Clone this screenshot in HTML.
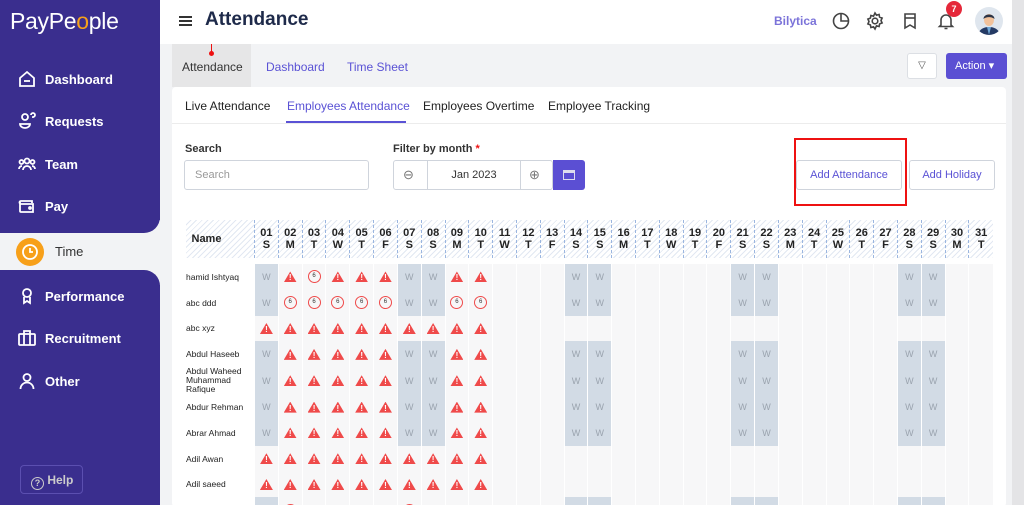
<!DOCTYPE html>
<html style="overflow:hidden;width:1024px;height:505px"><head><meta charset="utf-8"><style>
*{box-sizing:border-box;margin:0;padding:0}
body{width:1024px;height:505px;overflow:hidden;background:#f2f3f5;font-family:"Liberation Sans",sans-serif;position:relative}
.sb{position:absolute;left:0;top:0;width:160px;height:505px;background:#3a2e8e}
.sb .top{position:absolute;left:0;top:0;width:160px;height:233px;background:#3a2e8e;border-bottom-right-radius:16px}
.sb .bot{position:absolute;left:0;top:270px;width:160px;height:235px;background:#3a2e8e;border-top-right-radius:16px}
.sb .gap{position:absolute;left:0;top:220px;width:160px;height:65px;background:#f2f3f5}
.logo{position:absolute;left:10px;top:8px;color:#fff;font-size:23px;font-weight:normal;letter-spacing:-0.3px}
.logo b{color:#f6a11a;font-weight:normal}
.nav{position:absolute;left:18px;color:#fff;font-size:13px;font-weight:bold;display:flex;align-items:center}
.nav svg{width:18px;height:18px;margin-right:9px;fill:none;stroke:#fff;stroke-width:1.8}
.act{position:absolute;left:8px;top:233px;width:160px;height:37px;background:#f2f3f5;border-radius:19px 0 0 19px}
.act .ic{position:absolute;left:8px;top:5px;width:28px;height:28px;border-radius:50%;background:#f7a01a}
.act span{position:absolute;left:47px;top:11px;font-size:13px;color:#333}
.help{position:absolute;left:20px;top:465px;width:63px;height:29px;border:1px solid #5b4fb0;border-radius:4px;color:#ccc;font-size:12px;font-weight:bold;padding:7px 0 0 10px}
.tb{position:absolute;left:160px;top:0;width:852px;height:44px;background:#fff}
.tb h1{position:absolute;left:45px;top:9px;font-size:19px;color:#1e2a4a}
.ham{position:absolute;left:19px;top:16px;width:13px;height:10px;border-top:2px solid #333;border-bottom:2px solid #333}
.ham:after{content:"";position:absolute;left:0;top:2px;width:13px;height:2px;background:#333}
.bil{position:absolute;left:614px;top:14px;color:#7b73d9;font-size:12px;font-weight:bold}
.tic{position:absolute;top:11px;width:20px;height:20px;fill:none;stroke:#444;stroke-width:1.6}
.badge{position:absolute;left:786px;top:1px;width:16px;height:16px;border-radius:50%;background:#e5283a;color:#fff;font-size:9px;font-weight:bold;text-align:center;line-height:16px}
.av{position:absolute;left:815px;top:7px;width:28px;height:28px;border-radius:50%;background:#dfe6ee;overflow:hidden}
.scr{position:absolute;left:1012px;top:0;width:12px;height:505px;background:#e4e4e6}
.t1{position:absolute;left:172px;top:44px;width:79px;height:43px;background:#e6e6e7}
.tab{position:absolute;top:60px;font-size:12px;color:#5a52d5}
.card{position:absolute;left:172px;top:87px;width:834px;height:420px;background:#fff;border-radius:4px}
.it{position:absolute;top:12px;font-size:12px;color:#222}
.line{position:absolute;left:0;top:36px;width:834px;height:1px;background:#ececec}
.lbl{position:absolute;font-size:11px;font-weight:bold;color:#333}
.inp{position:absolute;border:1px solid #cfd4dc;border-radius:3px;height:30px;font-size:11px;color:#999}
.btn{position:absolute;top:160px;height:30px;border:1px solid #cfd4dc;border-radius:3px;color:#5a52d5;font-size:11px;text-align:center;line-height:28px;background:#fff}
.gw{position:absolute;left:185px;top:220px;width:808px;height:285px;overflow:hidden}
table{border-collapse:collapse;table-layout:fixed;width:808px}
th{height:38px;font-size:11px;color:#222;background:repeating-linear-gradient(135deg,#fff 0 3px,#e2e8f2 3px 4px);border-left:1px dashed #9bb6e0;line-height:12px}
th.n{border-left:none;text-align:left;padding-left:6px;width:69px}
tr.sp td{height:6px;background:#fff}
td{height:25.8px;text-align:center;font-size:9px;color:#aab;background:#f7f7f8;border-left:1px solid #fff;padding:0}
td.n{text-align:left;color:#222;font-size:8.5px;background:#fff;line-height:10px}
td.w{background:#d2dbe5;color:#9aa3ae}
.t{display:inline-block;width:13px;height:11px;background:#ef4a4a;clip-path:polygon(50% 0,100% 100%,0 100%);color:#fff;font-size:8px;font-weight:bold;line-height:13px;font-style:normal;vertical-align:middle}
.c{display:inline-block;width:13px;height:13px;border:1.6px solid #ef4a4a;border-radius:50%;color:#333;font-size:6px;line-height:10px;font-style:normal;vertical-align:middle}
</style></head><body>
<div class="sb"></div>
<div class="sb" style="background:none"><div class="gap"></div><div class="top"></div><div class="bot"></div></div>
<div class="logo">PayPe<b>o</b>ple</div>
<div class="nav" style="top:70px"><svg viewBox="0 0 18 18"><path d="M2 8 9 2l7 6v8H2z"/><path d="M6 11h6"/></svg>Dashboard</div>
<div class="nav" style="top:112px"><svg viewBox="0 0 18 18"><circle cx="7" cy="5" r="3"/><path d="M2 12h10a5 4 0 0 1-10 0z"/><path d="M13 3a2 2 0 1 1 2 2v1"/></svg>Requests</div>
<div class="nav" style="top:155px"><svg viewBox="0 0 18 18"><circle cx="9" cy="6" r="2.5"/><circle cx="3.5" cy="7" r="2"/><circle cx="14.5" cy="7" r="2"/><path d="M5 15a4 4 0 0 1 8 0M1 14a3 3 0 0 1 3-3M17 14a3 3 0 0 0-3-3"/></svg>Team</div>
<div class="nav" style="top:197px"><svg viewBox="0 0 18 18"><path d="M14 6V4H3a1 1 0 0 0 0 3h12v8H3a1 1 0 0 1-1-1V5"/><circle cx="12" cy="11" r="1"/></svg>Pay</div>
<div class="act"><div class="ic"><svg viewBox="0 0 28 28" width="28" height="28" fill="none" stroke="#fff" stroke-width="1.8"><circle cx="14" cy="14" r="7"/><path d="M14 10v4h3"/></svg></div><span>Time</span></div>
<div class="nav" style="top:287px"><svg viewBox="0 0 18 18"><circle cx="9" cy="6" r="4"/><path d="M6 10v6l3-2 3 2v-6"/></svg>Performance</div>
<div class="nav" style="top:329px"><svg viewBox="0 0 18 18"><rect x="1" y="5" width="16" height="11" rx="1"/><path d="M6 5V2h6v3M6 5v11M12 5v11"/></svg>Recruitment</div>
<div class="nav" style="top:372px"><svg viewBox="0 0 18 18"><circle cx="9" cy="5.5" r="3.5"/><path d="M2.5 17a6.5 6.5 0 0 1 13 0"/></svg>Other</div>
<div class="help"><span style="display:inline-block;width:13px;height:13px;border:1.4px solid #ccc;border-radius:50%;font-size:9px;text-align:center;line-height:11px;vertical-align:-2px">?</span> Help</div>

<div class="tb"><div class="ham"></div><h1>Attendance</h1><div class="bil">Bilytica</div>
<svg class="tic" style="left:671px" viewBox="0 0 20 20"><circle cx="10" cy="10" r="7.5"/><path d="M10 2.5V10h7.5"/></svg>
<svg class="tic" style="left:705px" viewBox="0 0 20 20"><circle cx="10" cy="10" r="2.8"/><path d="M10 2l1.5 2.2 2.6-.7.5 2.6 2.5 1-1.1 2.4 1.1 2.4-2.5 1-.5 2.6-2.6-.7L10 18l-1.5-2.2-2.6.7-.5-2.6-2.5-1L4 10.5 2.9 8.1l2.5-1 .5-2.6 2.6.7z"/></svg>
<svg class="tic" style="left:740px" viewBox="0 0 20 20"><path d="M5 3h10v14l-5-3-5 3z"/><path d="M5 7h10"/></svg>
<svg class="tic" style="left:776px" viewBox="0 0 20 20"><path d="M5 14V9a5 5 0 0 1 10 0v5l1.5 1.5h-13zM8.5 17.5h3"/></svg>
<div class="badge">7</div>
<div class="av"><svg viewBox="0 0 28 28" width="28" height="28"><path d="M3 28c1-6 6-8 11-8s10 2 11 8z" fill="#243a64"/><path d="M12 20h4l-2 8z" fill="#6fa7d6"/><ellipse cx="14" cy="13" rx="5" ry="6" fill="#f2c29b"/><path d="M8.5 12c0-6 11-6 11 0-2-2-8-3-11 0z" fill="#2c3446"/></svg></div>
</div>
<div class="scr"></div>
<div class="t1"></div><div style="position:absolute;left:211px;top:44px;width:1px;height:8px;background:#e11"></div><div style="position:absolute;left:209px;top:51px;width:5px;height:5px;border-radius:50%;background:#e11"></div>
<div class="tab" style="left:182px;color:#333">Attendance</div>
<div class="tab" style="left:266px">Dashboard</div>
<div class="tab" style="left:347px">Time Sheet</div>
<div style="position:absolute;left:907px;top:53px;width:30px;height:26px;background:#fff;border:1px solid #dcdfe4;border-radius:3px;text-align:center;font-size:10px;line-height:24px;color:#555">▽</div>
<div style="position:absolute;left:946px;top:53px;width:61px;height:26px;background:#5b4fd3;border-radius:3px;color:#fff;font-size:11px;line-height:26px;padding-left:9px">Action ▾</div>

<div class="card">
<div class="it" style="left:13px">Live Attendance</div>
<div class="it" style="left:115px;color:#5a52d5">Employees Attendance</div>
<div class="it" style="left:251px">Employees Overtime</div>
<div class="it" style="left:376px">Employee Tracking</div>
<div class="line"></div><div style="position:absolute;left:114px;top:34px;width:120px;height:2px;background:#5a52d5"></div>
</div>
<div class="lbl" style="left:185px;top:143px">Search</div>
<div class="inp" style="left:184px;top:160px;width:185px;padding:8px 10px">Search</div>
<div class="lbl" style="left:393px;top:143px">Filter by month <span style="color:#e11">*</span></div>
<div class="inp" style="left:393px;top:160px;width:160px;color:#333"><span style="position:absolute;left:9px;top:6px;font-size:13px;color:#777">⊖</span><div style="position:absolute;left:33px;top:0;width:94px;height:28px;border-left:1px solid #cfd4dc;border-right:1px solid #cfd4dc;text-align:center;line-height:28px;font-size:11px">Jan 2023</div><span style="position:absolute;left:135px;top:6px;font-size:13px;color:#777">⊕</span></div>
<div style="position:absolute;left:553px;top:160px;width:32px;height:30px;background:#5b4fd3;border-radius:0 3px 3px 0"><div style="position:absolute;left:10px;top:10px;width:12px;height:10px;border:1.5px solid #dde;border-top-width:3px"></div></div>
<div class="btn" style="left:796px;width:106px">Add Attendance</div>
<div class="btn" style="left:909px;width:86px">Add Holiday</div>
<div style="position:absolute;left:794px;top:138px;width:113px;height:68px;border:2px solid #e11"></div>

<div class="gw"><table>
<tr><th class="n">Name</th><th>01<br>S</th><th>02<br>M</th><th>03<br>T</th><th>04<br>W</th><th>05<br>T</th><th>06<br>F</th><th>07<br>S</th><th>08<br>S</th><th>09<br>M</th><th>10<br>T</th><th>11<br>W</th><th>12<br>T</th><th>13<br>F</th><th>14<br>S</th><th>15<br>S</th><th>16<br>M</th><th>17<br>T</th><th>18<br>W</th><th>19<br>T</th><th>20<br>F</th><th>21<br>S</th><th>22<br>S</th><th>23<br>M</th><th>24<br>T</th><th>25<br>W</th><th>26<br>T</th><th>27<br>F</th><th>28<br>S</th><th>29<br>S</th><th>30<br>M</th><th>31<br>T</th></tr>
<tr class="sp"><td colspan="32"></td></tr>
<tr><td class="n">hamid Ishtyaq</td><td class="w">W</td><td><i class="t">!</i></td><td><i class="c">6</i></td><td><i class="t">!</i></td><td><i class="t">!</i></td><td><i class="t">!</i></td><td class="w">W</td><td class="w">W</td><td><i class="t">!</i></td><td><i class="t">!</i></td><td></td><td></td><td></td><td class="w">W</td><td class="w">W</td><td></td><td></td><td></td><td></td><td></td><td class="w">W</td><td class="w">W</td><td></td><td></td><td></td><td></td><td></td><td class="w">W</td><td class="w">W</td><td></td><td></td></tr>
<tr><td class="n">abc ddd</td><td class="w">W</td><td><i class="c">6</i></td><td><i class="c">6</i></td><td><i class="c">6</i></td><td><i class="c">6</i></td><td><i class="c">6</i></td><td class="w">W</td><td class="w">W</td><td><i class="c">6</i></td><td><i class="c">6</i></td><td></td><td></td><td></td><td class="w">W</td><td class="w">W</td><td></td><td></td><td></td><td></td><td></td><td class="w">W</td><td class="w">W</td><td></td><td></td><td></td><td></td><td></td><td class="w">W</td><td class="w">W</td><td></td><td></td></tr>
<tr><td class="n">abc xyz</td><td><i class="t">!</i></td><td><i class="t">!</i></td><td><i class="t">!</i></td><td><i class="t">!</i></td><td><i class="t">!</i></td><td><i class="t">!</i></td><td><i class="t">!</i></td><td><i class="t">!</i></td><td><i class="t">!</i></td><td><i class="t">!</i></td><td></td><td></td><td></td><td></td><td></td><td></td><td></td><td></td><td></td><td></td><td></td><td></td><td></td><td></td><td></td><td></td><td></td><td></td><td></td><td></td><td></td></tr>
<tr><td class="n">Abdul Haseeb</td><td class="w">W</td><td><i class="t">!</i></td><td><i class="t">!</i></td><td><i class="t">!</i></td><td><i class="t">!</i></td><td><i class="t">!</i></td><td class="w">W</td><td class="w">W</td><td><i class="t">!</i></td><td><i class="t">!</i></td><td></td><td></td><td></td><td class="w">W</td><td class="w">W</td><td></td><td></td><td></td><td></td><td></td><td class="w">W</td><td class="w">W</td><td></td><td></td><td></td><td></td><td></td><td class="w">W</td><td class="w">W</td><td></td><td></td></tr>
<tr><td class="n" style="overflow:hidden;line-height:9px">Abdul Waheed Muhammad Rafique</td><td class="w">W</td><td><i class="t">!</i></td><td><i class="t">!</i></td><td><i class="t">!</i></td><td><i class="t">!</i></td><td><i class="t">!</i></td><td class="w">W</td><td class="w">W</td><td><i class="t">!</i></td><td><i class="t">!</i></td><td></td><td></td><td></td><td class="w">W</td><td class="w">W</td><td></td><td></td><td></td><td></td><td></td><td class="w">W</td><td class="w">W</td><td></td><td></td><td></td><td></td><td></td><td class="w">W</td><td class="w">W</td><td></td><td></td></tr>
<tr><td class="n">Abdur Rehman</td><td class="w">W</td><td><i class="t">!</i></td><td><i class="t">!</i></td><td><i class="t">!</i></td><td><i class="t">!</i></td><td><i class="t">!</i></td><td class="w">W</td><td class="w">W</td><td><i class="t">!</i></td><td><i class="t">!</i></td><td></td><td></td><td></td><td class="w">W</td><td class="w">W</td><td></td><td></td><td></td><td></td><td></td><td class="w">W</td><td class="w">W</td><td></td><td></td><td></td><td></td><td></td><td class="w">W</td><td class="w">W</td><td></td><td></td></tr>
<tr><td class="n">Abrar Ahmad</td><td class="w">W</td><td><i class="t">!</i></td><td><i class="t">!</i></td><td><i class="t">!</i></td><td><i class="t">!</i></td><td><i class="t">!</i></td><td class="w">W</td><td class="w">W</td><td><i class="t">!</i></td><td><i class="t">!</i></td><td></td><td></td><td></td><td class="w">W</td><td class="w">W</td><td></td><td></td><td></td><td></td><td></td><td class="w">W</td><td class="w">W</td><td></td><td></td><td></td><td></td><td></td><td class="w">W</td><td class="w">W</td><td></td><td></td></tr>
<tr><td class="n">Adil Awan</td><td><i class="t">!</i></td><td><i class="t">!</i></td><td><i class="t">!</i></td><td><i class="t">!</i></td><td><i class="t">!</i></td><td><i class="t">!</i></td><td><i class="t">!</i></td><td><i class="t">!</i></td><td><i class="t">!</i></td><td><i class="t">!</i></td><td></td><td></td><td></td><td></td><td></td><td></td><td></td><td></td><td></td><td></td><td></td><td></td><td></td><td></td><td></td><td></td><td></td><td></td><td></td><td></td><td></td></tr>
<tr><td class="n">Adil saeed</td><td><i class="t">!</i></td><td><i class="t">!</i></td><td><i class="t">!</i></td><td><i class="t">!</i></td><td><i class="t">!</i></td><td><i class="t">!</i></td><td><i class="t">!</i></td><td><i class="t">!</i></td><td><i class="t">!</i></td><td><i class="t">!</i></td><td></td><td></td><td></td><td></td><td></td><td></td><td></td><td></td><td></td><td></td><td></td><td></td><td></td><td></td><td></td><td></td><td></td><td></td><td></td><td></td><td></td></tr>
<tr><td class="n"></td><td class="w">W</td><td><i class="c">6</i></td><td><i class="t">!</i></td><td><i class="t">!</i></td><td><i class="t">!</i></td><td><i class="t">!</i></td><td><i class="c">6</i></td><td><i class="t">!</i></td><td><i class="t">!</i></td><td><i class="t">!</i></td><td></td><td></td><td></td><td class="w">W</td><td class="w">W</td><td></td><td></td><td></td><td></td><td></td><td class="w">W</td><td class="w">W</td><td></td><td></td><td></td><td></td><td></td><td class="w">W</td><td class="w">W</td><td></td><td></td></tr>
</table></div>
</body></html>
